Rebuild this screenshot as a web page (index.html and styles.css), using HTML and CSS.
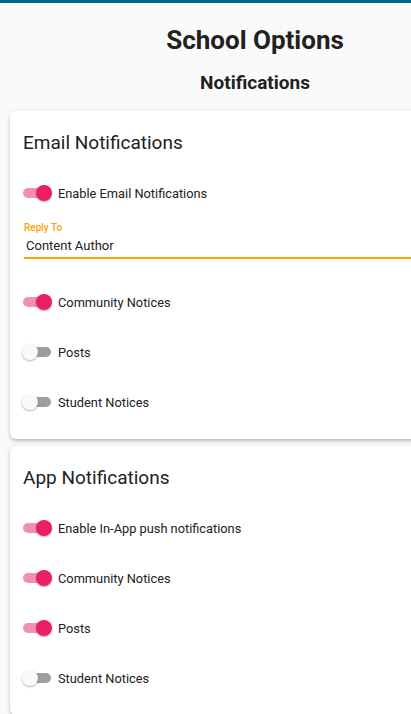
FILE: index.html
```html
<!DOCTYPE html>
<html>
<head>
	<title>School Options</title>
	<link rel="stylesheet" href="styles.css">
</head>
<body>
	<div class="topbar"></div>
	<div class="page">
		<h1 class="pagetitle">School Options</h1>
		<h2 class="subtitle">Notifications</h2>

		<div class="card">
			<div class="cardtitle">Email Notifications</div>
			<div class="row">
				<span class="toggle on"><span class="thumb"></span></span>
				<span class="label">Enable Email Notifications</span>
			</div>
			<div class="field">
				<div class="fieldlabel">Reply To</div>
				<div class="fieldvalue">Content Author</div>
			</div>
			<div class="row">
				<span class="toggle on"><span class="thumb"></span></span>
				<span class="label">Community Notices</span>
			</div>
			<div class="row">
				<span class="toggle"><span class="thumb"></span></span>
				<span class="label">Posts</span>
			</div>
			<div class="row">
				<span class="toggle"><span class="thumb"></span></span>
				<span class="label">Student Notices</span>
			</div>
		</div>

		<div class="card">
			<div class="cardtitle">App Notifications</div>
			<div class="row">
				<span class="toggle on"><span class="thumb"></span></span>
				<span class="label">Enable In-App push notifications</span>
			</div>
			<div class="row">
				<span class="toggle on"><span class="thumb"></span></span>
				<span class="label">Community Notices</span>
			</div>
			<div class="row">
				<span class="toggle on"><span class="thumb"></span></span>
				<span class="label">Posts</span>
			</div>
			<div class="row">
				<span class="toggle"><span class="thumb"></span></span>
				<span class="label">Student Notices</span>
			</div>
		</div>
	</div>
</body>
</html>
```

FILE: styles.css
```css
html, body {
	margin: 0;
	overflow: hidden;
}

body {
	background-color: #fafafa;
	font-family: Roboto, "Liberation Sans", sans-serif;
	color: #212121;
}

.topbar {
	height: 3px;
	background-color: #00687c;
}

.page {
	width: 490px;
	padding: 0 0 0 10px;
}

.pagetitle {
	margin: 0;
	padding-top: 22px;
	font-size: 26px;
	line-height: 30px;
	font-weight: 700;
	text-align: center;
}

.subtitle {
	margin: 0;
	padding-top: 16px;
	font-size: 19px;
	line-height: 24px;
	font-weight: 700;
	text-align: center;
}

.card {
	background-color: white;
	border-radius: 6px;
	box-shadow: 0 2px 3px rgba(0, 0, 0, 0.2), 0 1px 6px rgba(0, 0, 0, 0.08);
	padding: 16px 13px 12px 13px;
	margin-bottom: 7px;
}

.subtitle + .card {
	margin-top: 16px;
}

.cardtitle {
	font-size: 19px;
	line-height: 32px;
	margin-bottom: 9px;
}

.row {
	display: flex;
	align-items: center;
	height: 50px;
}

.label {
	font-size: 12.8px;
	margin-left: 7px;
}

.toggle {
	position: relative;
	width: 28px;
	height: 10px;
	border-radius: 5px;
	background-color: rgba(0, 0, 0, 0.38);
}

.toggle.on {
	background-color: #f48fb1;
}

.thumb {
	position: absolute;
	top: -3px;
	left: -1px;
	width: 16px;
	height: 16px;
	border-radius: 50%;
	background-color: #fafafa;
	box-shadow: 0 1px 2px rgba(0, 0, 0, 0.3);
}

.toggle.on .thumb {
	left: 13px;
	background-color: #e91e63;
}

.field {
	padding-top: 3px;
	margin-bottom: 18px;
	margin-left: 1px;
	border-bottom: 2px solid #ffa000;
	padding-bottom: 3px;
}

.fieldlabel {
	font-size: 10px;
	line-height: 14px;
	color: #ffa000;
	font-weight: 500;
}

.fieldvalue {
	font-size: 13px;
	line-height: 16px;
	margin-top: 3px;
	padding-left: 2px;
}
```
